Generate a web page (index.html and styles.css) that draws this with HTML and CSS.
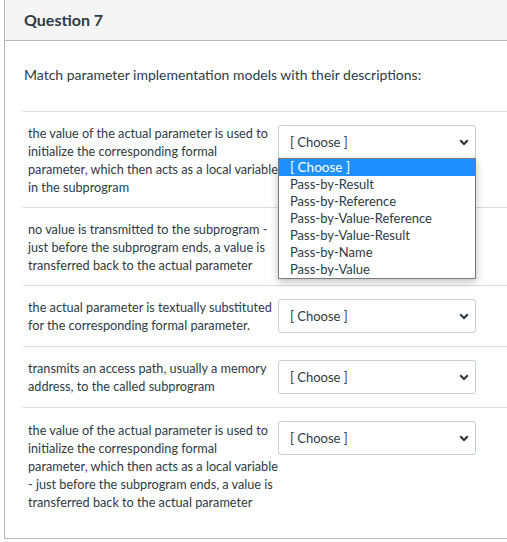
FILE: index.html
```html
<!DOCTYPE html>
<html>
<head>
<meta charset="utf-8">
<link rel="stylesheet" href="styles.css">
</head>
<body>
<div class="question">
  <div class="q-header">Question 7</div>
  <div class="q-body">
    <p class="prompt">Match parameter implementation models with their descriptions:</p>
    <div class="rows">
      <div class="row">
        <div class="desc">the value of the actual parameter is used to initialize the corresponding formal parameter, which then acts as a local variable in the subprogram</div>
        <div class="select-wrap">
          <div class="select"><span>[ Choose ]</span><svg class="chev" width="10" height="7" viewBox="0 0 10 7"><path d="M1.2 1.2 L5 5 L8.8 1.2" fill="none" stroke="#2d3b45" stroke-width="2.2"/></svg></div>
          <ul class="dropdown">
            <li class="active">[ Choose ]</li>
            <li>Pass-by-Result</li>
            <li>Pass-by-Reference</li>
            <li>Pass-by-Value-Reference</li>
            <li>Pass-by-Value-Result</li>
            <li>Pass-by-Name</li>
            <li>Pass-by-Value</li>
          </ul>
        </div>
      </div>
      <div class="row">
        <div class="desc">no value is transmitted to the subprogram - just before the subprogram ends, a value is transferred back to the actual parameter</div>
        <div class="select-wrap">
          <div class="select covered"><span>[ Choose ]</span><svg class="chev" width="10" height="7" viewBox="0 0 10 7"><path d="M1.2 1.2 L5 5 L8.8 1.2" fill="none" stroke="#2d3b45" stroke-width="2.2"/></svg></div>
        </div>
      </div>
      <div class="row">
        <div class="desc">the actual parameter is textually substituted for the corresponding formal parameter.</div>
        <div class="select-wrap">
          <div class="select"><span>[ Choose ]</span><svg class="chev" width="10" height="7" viewBox="0 0 10 7"><path d="M1.2 1.2 L5 5 L8.8 1.2" fill="none" stroke="#2d3b45" stroke-width="2.2"/></svg></div>
        </div>
      </div>
      <div class="row">
        <div class="desc">transmits an access path, usually a memory address, to the called subprogram</div>
        <div class="select-wrap">
          <div class="select"><span>[ Choose ]</span><svg class="chev" width="10" height="7" viewBox="0 0 10 7"><path d="M1.2 1.2 L5 5 L8.8 1.2" fill="none" stroke="#2d3b45" stroke-width="2.2"/></svg></div>
        </div>
      </div>
      <div class="row">
        <div class="desc">the value of the actual parameter is used to initialize the corresponding formal parameter, which then acts as a local variable - just before the subprogram ends, a value is transferred back to the actual parameter</div>
        <div class="select-wrap">
          <div class="select"><span>[ Choose ]</span><svg class="chev" width="10" height="7" viewBox="0 0 10 7"><path d="M1.2 1.2 L5 5 L8.8 1.2" fill="none" stroke="#2d3b45" stroke-width="2.2"/></svg></div>
        </div>
      </div>
    </div>
  </div>
</div>
</body>
</html>
```
FILE: styles.css
```css
html, body {
  margin: 0;
  padding: 0;
  overflow: hidden;
  background: #fff;
}
body {
  font-family: Lato, "Noto Sans", sans-serif;
  color: #2d3b45;
  width: 507px;
  height: 542px;
}
.question {
  margin-left: 4px;
  width: 502px;
  border: 1px solid #b7b7b7;
  border-top: none;
  border-right: none;
  padding-bottom: 16px;
}
.q-header {
  background: #f5f5f5;
  border-bottom: 1px solid #b7b7b7;
  box-sizing: border-box;
  height: 41px;
  padding-left: 19px;
  font-weight: bold;
  font-size: 16px;
  line-height: 40px;
}
.q-body {
  padding: 24px 0 0 0;
}
.prompt {
  margin: 0 0 26px 19px;
  font-size: 14px;
  line-height: 20px;
}
.rows {
  margin-left: 18px;
}
.row {
  display: flex;
  align-items: flex-start;
  border-top: 1px solid #dcdcdc;
  padding: 12px 0 11px 5px;
}
.row:last-child {
  padding-top: 13px;
}
.desc {
  width: 250px;
  font-size: 12.7px;
  line-height: 18px;
}
.select-wrap {
  position: relative;
  margin-top: 1px;
  margin-bottom: 2px;
}
.row:last-child .select-wrap {
  margin-top: 0;
}
.select {
  box-sizing: border-box;
  width: 198px;
  height: 34px;
  border: 1px solid #c7cdd1;
  border-radius: 3px;
  display: flex;
  align-items: center;
  justify-content: space-between;
  padding: 0 6px 0 11px;
  font-size: 13px;
  background: #fff;
}
.select.covered span {
  visibility: hidden;
}
.chev {
  display: block;
}
.dropdown {
  position: absolute;
  left: 0;
  top: 33px;
  width: 198px;
  box-sizing: border-box;
  margin: 0;
  padding: 0;
  list-style: none;
  background: #fff;
  border: 1px solid #7a7a7a;
  box-shadow: 0 3px 8px rgba(0,0,0,0.25);
  z-index: 2;
}
.dropdown li {
  height: 17px;
  line-height: 17px;
  font-size: 13px;
  padding-left: 11px;
}
.dropdown li.active {
  background: #1e90ff;
  color: #fff;
  font-size: 13.5px;
}
```
